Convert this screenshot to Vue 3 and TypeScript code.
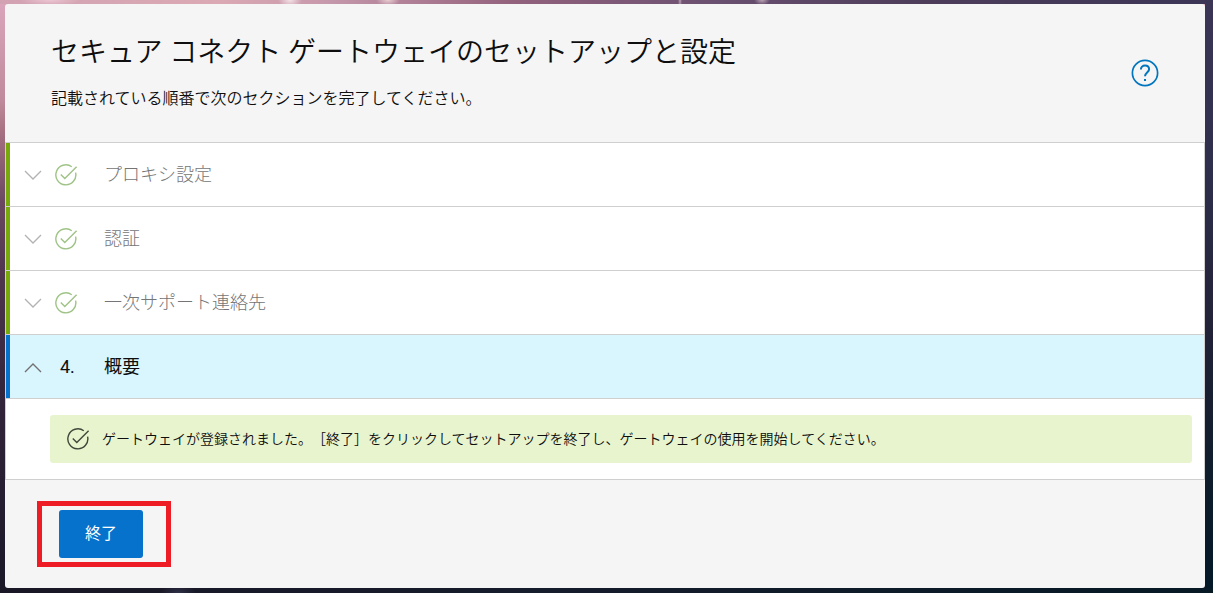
<script setup lang="ts">
interface Step {
  title: string
  done: boolean
}

const steps: Step[] = [
  { title: 'プロキシ設定', done: true },
  { title: '認証', done: true },
  { title: '一次サポート連絡先', done: true },
  { title: '概要', done: false },
]
</script>

<template>
  <div class="backdrop">
    <main class="card">
      <header class="head">
        <div>
          <h1>セキュア コネクト ゲートウェイのセットアップと設定</h1>
          <p>記載されている順番で次のセクションを完了してください。</p>
        </div>
        <button class="help" type="button" aria-label="ヘルプ">
          <svg width="28" height="28" viewBox="0 0 28 28" fill="none" stroke="currentColor">
            <circle cx="14" cy="14" r="12.6" stroke-width="1.7" />
            <path d="M9.9 10.6C9.9 8 11.6 6.6 14 6.6s4.1 1.5 4.1 3.7c0 3-4.1 3.5-4.1 6.9" stroke-width="2" />
            <path d="M13 20h2v2h-2z" fill="currentColor" stroke="none" />
          </svg>
        </button>
      </header>

      <section class="steps">
        <button
          v-for="(step, i) in steps"
          :key="step.title"
          type="button"
          class="step"
          :class="{ active: !step.done }"
          :disabled="step.done"
          :aria-expanded="!step.done"
        >
          <svg class="chevron" width="18" height="12" viewBox="0 0 18 12" fill="none" stroke="currentColor" stroke-width="1.3">
            <path :d="step.done ? 'M1 2l8 8 8-8' : 'M1 11l8-8 8 8'" />
          </svg>
          <span class="mark">
            <svg v-if="step.done" class="tick" width="24" height="24" viewBox="0 0 24 24" fill="none" stroke="currentColor" stroke-width="1.4">
              <path d="M17.8 3.8A10 10 0 1 0 21.6 9.6M6.8 11.6l4 4L22.6 3.8" />
            </svg>
            <template v-else>{{ i + 1 }}.</template>
          </span>
          <span>{{ step.title }}</span>
        </button>

        <div class="panel">
          <div class="notice" role="status">
            <svg width="24" height="24" viewBox="0 0 24 24" fill="none" stroke="currentColor" stroke-width="1.4">
              <path d="M17.8 3.8A10 10 0 1 0 21.6 9.6M6.8 11.6l4 4L22.6 3.8" />
            </svg>
            <span>ゲートウェイが登録されました。［終了］をクリックしてセットアップを終了し、ゲートウェイの使用を開始してください。</span>
          </div>
        </div>
      </section>

      <footer class="foot">
        <div class="highlight">
          <button class="finish" type="button">終了</button>
        </div>
      </footer>
    </main>
  </div>
</template>

<style>
body {
  margin: 0;
}
</style>

<style scoped>
.backdrop {
  box-sizing: border-box;
  min-height: 100vh;
  padding: 4px 8px 5px 5px;
  display: flex;
  background:
    radial-gradient(ellipse 18px 8px at 178px 100%, #303048, transparent) no-repeat,
    radial-gradient(ellipse 12px 8px at 290px 0, #f3e2e6, transparent) top / 100% 4px no-repeat,
    radial-gradient(ellipse 12px 6px at 388px 0, #e9cdd2, transparent) top / 100% 4px no-repeat,
    radial-gradient(ellipse 30px 6px at 50px 0, #ecc6d2, transparent) top / 100% 4px no-repeat,
    radial-gradient(ellipse 2px 12px at 680px 0, #bba3b4, transparent) top / 100% 4px no-repeat,
    radial-gradient(ellipse 8px 5px at 762px 0, #bba3b4, transparent) top / 100% 4px no-repeat,
    linear-gradient(90deg, #d2a2b3, #dba9b4 18%, #c698ab 27%, #93627d 42%, #684f70 60%, #4e3d5b 75%, #3b3556) top / 100% 4px no-repeat,
    linear-gradient(90deg, #1a1726, #151c2b 45%, #061925) bottom / 100% 5px no-repeat,
    linear-gradient(#3b3556, #2e2f4c 28%, #222238 55%, #101d2c 78%, #031827) right / 8px 100% no-repeat,
    linear-gradient(#dba6bb, #c08a9c 17%, #a87282 22%, #6b4862 34%, #50364f 46%, #33253a 66%, #1a1828);
  font-family: Roboto, "Noto Sans CJK JP", sans-serif;
  color: #0e0e0e;
  text-spacing-trim: space-all;
}

.card {
  flex: 1;
  min-width: 0;
  background: #f5f5f5;
  border-radius: 3px;
}

.head {
  display: flex;
  justify-content: space-between;
  align-items: center;
  padding: 29px 46px;
}

h1 {
  margin: 0;
  font-size: 28px;
  line-height: 40px;
  font-weight: 350;
}

p {
  margin: 14px 0 2px;
  font-size: 16px;
  line-height: 24px;
  font-weight: 350;
}

.help {
  flex: none;
  width: 28px;
  height: 28px;
  padding: 0;
  border: 0;
  background: none;
  color: #0076be;
}

.help svg,
.step svg,
.notice svg {
  display: block;
  flex: none;
}

.steps {
  border: 1px solid #cfcfcf;
}

.step {
  --bar: #77aa0a;
  width: 100%;
  height: 64px;
  padding: 0 16px 0 18px;
  display: flex;
  align-items: center;
  border: 0;
  border-bottom: 1px solid #cfcfcf;
  background: linear-gradient(var(--bar), var(--bar)) left / 4px 100% no-repeat #fff;
  font: 300 18px/28px Roboto, "Noto Sans CJK JP", sans-serif;
  color: #757575;
  text-align: left;
}

.step.active {
  --bar: #0672cb;
  background-color: #d9f5fd;
  color: #0e0e0e;
  font-weight: 400;
}

.chevron {
  color: #b2b2b2;
}

.active .chevron {
  color: #707070;
}

.mark {
  box-sizing: border-box;
  width: 50px;
  margin-left: 12px;
}

.active .mark {
  padding-left: 6px;
}

.tick {
  color: #9fc386;
}

.panel {
  padding: 16px 12px 16px 44px;
  background: #fff;
}

.notice {
  display: flex;
  align-items: center;
  gap: 12px;
  min-height: 48px;
  padding: 0 16px;
  box-sizing: border-box;
  border-radius: 3px;
  background: #e8f4ce;
  font-size: 14px;
  line-height: 20px;
  font-weight: 350;
}

.notice svg {
  color: #40463a;
}

.foot {
  padding: 21px 32px;
}

.highlight {
  width: fit-content;
  padding: 4px 23px 4px 17px;
  border: 5px solid #ee1c25;
}

.finish {
  display: block;
  height: 48px;
  padding: 0 26px;
  border: 0;
  border-radius: 3px;
  background: #0672cb;
  color: #fff;
  font: 400 16px/24px Roboto, "Noto Sans CJK JP", sans-serif;
}
</style>
